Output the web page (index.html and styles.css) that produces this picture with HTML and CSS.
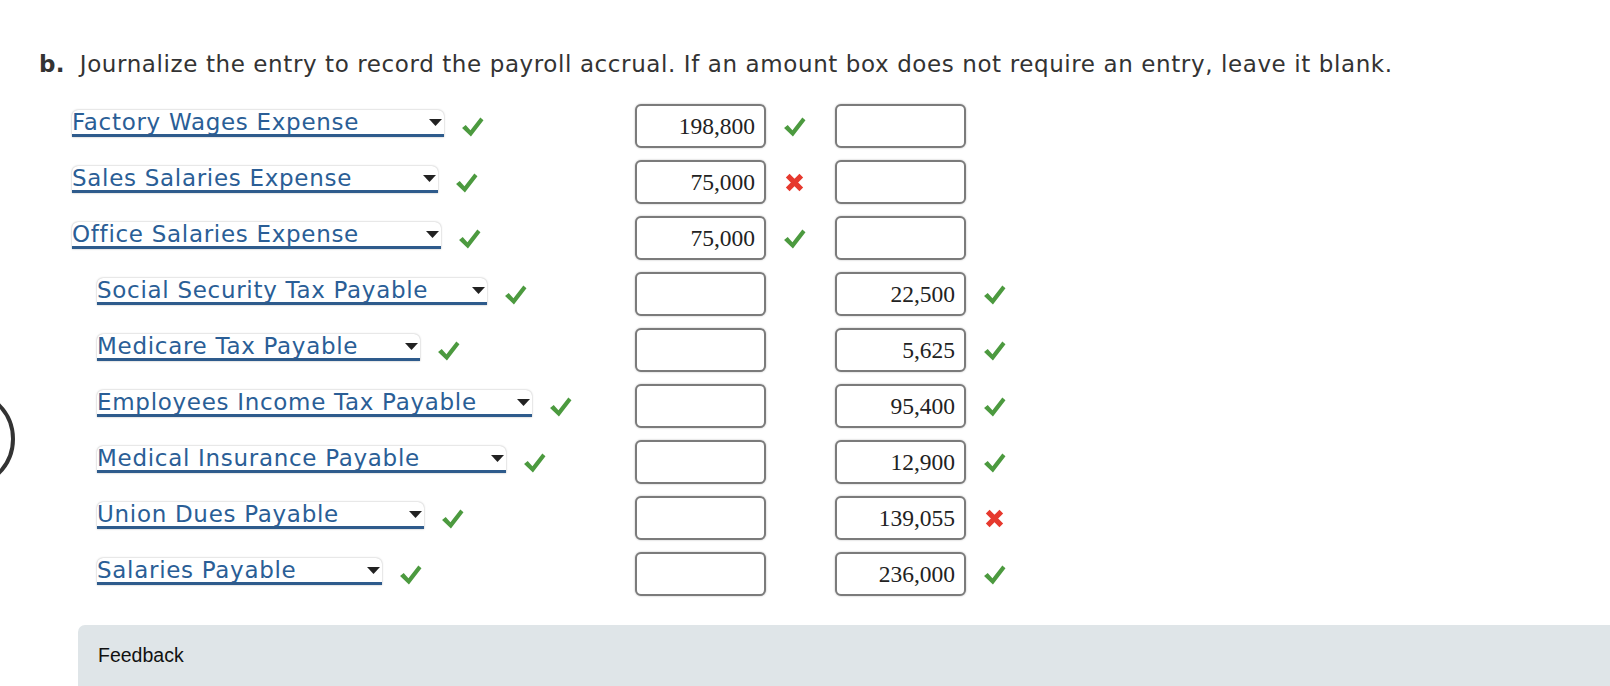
FILE: index.html
```html
<!DOCTYPE html>
<html>
<head>
<meta charset="utf-8">
<link rel="stylesheet" href="styles.css">
</head>
<body>
<div class="side-ring"></div>
<div class="page">
  <p class="prompt"><span class="part">b.</span>Journalize the entry to record the payroll accrual. If an amount box does not require an entry, leave it blank.</p>
  <div class="journal">
    <div class="row">
      <div class="acct">
        <div class="sel w1"><span class="sel-text">Factory Wages Expense</span><svg class="arrow" viewBox="0 0 13 7"><path d="M0 0H13L6.5 7Z"/></svg></div>
        <svg class="mark ok" viewBox="0 0 22 22"><path d="M1 12.5 4.5 9.5 9 14.5 18.5 2.5 21.5 5 9.5 20.5Z"/></svg>
      </div>
      <div class="amt">198,800</div>
      <div class="markcell"><svg class="mark ok" viewBox="0 0 22 22"><path d="M1 12.5 4.5 9.5 9 14.5 18.5 2.5 21.5 5 9.5 20.5Z"/></svg></div>
      <div class="amt"></div>
      <div class="markcell"></div>
    </div>
    <div class="row">
      <div class="acct">
        <div class="sel w2"><span class="sel-text">Sales Salaries Expense</span><svg class="arrow" viewBox="0 0 13 7"><path d="M0 0H13L6.5 7Z"/></svg></div>
        <svg class="mark ok" viewBox="0 0 22 22"><path d="M1 12.5 4.5 9.5 9 14.5 18.5 2.5 21.5 5 9.5 20.5Z"/></svg>
      </div>
      <div class="amt">75,000</div>
      <div class="markcell"><svg class="mark bad" viewBox="0 0 22 22"><path d="M4.5 4.5 17.5 17.5M17.5 4.5 4.5 17.5"/></svg></div>
      <div class="amt"></div>
      <div class="markcell"></div>
    </div>
    <div class="row">
      <div class="acct">
        <div class="sel w3"><span class="sel-text">Office Salaries Expense</span><svg class="arrow" viewBox="0 0 13 7"><path d="M0 0H13L6.5 7Z"/></svg></div>
        <svg class="mark ok" viewBox="0 0 22 22"><path d="M1 12.5 4.5 9.5 9 14.5 18.5 2.5 21.5 5 9.5 20.5Z"/></svg>
      </div>
      <div class="amt">75,000</div>
      <div class="markcell"><svg class="mark ok" viewBox="0 0 22 22"><path d="M1 12.5 4.5 9.5 9 14.5 18.5 2.5 21.5 5 9.5 20.5Z"/></svg></div>
      <div class="amt"></div>
      <div class="markcell"></div>
    </div>
    <div class="row">
      <div class="acct credit">
        <div class="sel w4"><span class="sel-text">Social Security Tax Payable</span><svg class="arrow" viewBox="0 0 13 7"><path d="M0 0H13L6.5 7Z"/></svg></div>
        <svg class="mark ok" viewBox="0 0 22 22"><path d="M1 12.5 4.5 9.5 9 14.5 18.5 2.5 21.5 5 9.5 20.5Z"/></svg>
      </div>
      <div class="amt"></div>
      <div class="markcell"></div>
      <div class="amt">22,500</div>
      <div class="markcell"><svg class="mark ok" viewBox="0 0 22 22"><path d="M1 12.5 4.5 9.5 9 14.5 18.5 2.5 21.5 5 9.5 20.5Z"/></svg></div>
    </div>
    <div class="row">
      <div class="acct credit">
        <div class="sel w5"><span class="sel-text">Medicare Tax Payable</span><svg class="arrow" viewBox="0 0 13 7"><path d="M0 0H13L6.5 7Z"/></svg></div>
        <svg class="mark ok" viewBox="0 0 22 22"><path d="M1 12.5 4.5 9.5 9 14.5 18.5 2.5 21.5 5 9.5 20.5Z"/></svg>
      </div>
      <div class="amt"></div>
      <div class="markcell"></div>
      <div class="amt">5,625</div>
      <div class="markcell"><svg class="mark ok" viewBox="0 0 22 22"><path d="M1 12.5 4.5 9.5 9 14.5 18.5 2.5 21.5 5 9.5 20.5Z"/></svg></div>
    </div>
    <div class="row">
      <div class="acct credit">
        <div class="sel w6"><span class="sel-text">Employees Income Tax Payable</span><svg class="arrow" viewBox="0 0 13 7"><path d="M0 0H13L6.5 7Z"/></svg></div>
        <svg class="mark ok" viewBox="0 0 22 22"><path d="M1 12.5 4.5 9.5 9 14.5 18.5 2.5 21.5 5 9.5 20.5Z"/></svg>
      </div>
      <div class="amt"></div>
      <div class="markcell"></div>
      <div class="amt">95,400</div>
      <div class="markcell"><svg class="mark ok" viewBox="0 0 22 22"><path d="M1 12.5 4.5 9.5 9 14.5 18.5 2.5 21.5 5 9.5 20.5Z"/></svg></div>
    </div>
    <div class="row">
      <div class="acct credit">
        <div class="sel w7"><span class="sel-text">Medical Insurance Payable</span><svg class="arrow" viewBox="0 0 13 7"><path d="M0 0H13L6.5 7Z"/></svg></div>
        <svg class="mark ok" viewBox="0 0 22 22"><path d="M1 12.5 4.5 9.5 9 14.5 18.5 2.5 21.5 5 9.5 20.5Z"/></svg>
      </div>
      <div class="amt"></div>
      <div class="markcell"></div>
      <div class="amt">12,900</div>
      <div class="markcell"><svg class="mark ok" viewBox="0 0 22 22"><path d="M1 12.5 4.5 9.5 9 14.5 18.5 2.5 21.5 5 9.5 20.5Z"/></svg></div>
    </div>
    <div class="row">
      <div class="acct credit">
        <div class="sel w8"><span class="sel-text">Union Dues Payable</span><svg class="arrow" viewBox="0 0 13 7"><path d="M0 0H13L6.5 7Z"/></svg></div>
        <svg class="mark ok" viewBox="0 0 22 22"><path d="M1 12.5 4.5 9.5 9 14.5 18.5 2.5 21.5 5 9.5 20.5Z"/></svg>
      </div>
      <div class="amt"></div>
      <div class="markcell"></div>
      <div class="amt">139,055</div>
      <div class="markcell"><svg class="mark bad" viewBox="0 0 22 22"><path d="M4.5 4.5 17.5 17.5M17.5 4.5 4.5 17.5"/></svg></div>
    </div>
    <div class="row">
      <div class="acct credit">
        <div class="sel w9"><span class="sel-text">Salaries Payable</span><svg class="arrow" viewBox="0 0 13 7"><path d="M0 0H13L6.5 7Z"/></svg></div>
        <svg class="mark ok" viewBox="0 0 22 22"><path d="M1 12.5 4.5 9.5 9 14.5 18.5 2.5 21.5 5 9.5 20.5Z"/></svg>
      </div>
      <div class="amt"></div>
      <div class="markcell"></div>
      <div class="amt">236,000</div>
      <div class="markcell"><svg class="mark ok" viewBox="0 0 22 22"><path d="M1 12.5 4.5 9.5 9 14.5 18.5 2.5 21.5 5 9.5 20.5Z"/></svg></div>
    </div>
  </div>
  <div class="feedback"><span class="fb-title">Feedback</span></div>
</div>
</body>
</html>
```

FILE: styles.css
```css
html, body {
  margin: 0;
  padding: 0;
  background: #fff;
  overflow: hidden;
}

body {
  width: 1610px;
  height: 686px;
  position: relative;
}

.side-ring {
  position: absolute;
  left: -85px;
  top: 389px;
  width: 92px;
  height: 92px;
  border: 4px solid #333;
  border-radius: 50%;
}

.page {
  padding-top: 51px;
}

.prompt {
  margin: 0 0 27px 39px;
  font-family: "DejaVu Sans", Verdana, sans-serif;
  font-size: 23px;
  letter-spacing: 0.6px;
  line-height: 26px;
  color: #333;
  white-space: nowrap;
}

.part {
  font-weight: bold;
  margin-right: 15px;
  letter-spacing: 0.3px;
}

.journal {
  display: flex;
  flex-direction: column;
  gap: 12px;
  padding-left: 72px;
}

.row {
  display: flex;
  height: 44px;
}

.acct {
  width: 563px;
  display: flex;
  align-items: flex-start;
}

.acct.credit {
  padding-left: 25px;
  box-sizing: border-box;
}

.sel {
  margin-top: 6px;
  height: 24px;
  border-bottom: 3px solid #2e5b8c;
  border-radius: 6px 6px 0 0;
  background: #fff;
  box-shadow: 0 0 2px rgba(0, 0, 0, 0.35);
  display: flex;
  align-items: center;
  justify-content: space-between;
  padding-right: 2px;
  box-sizing: content-box;
  overflow: hidden;
}

.sel-text {
  font-family: "DejaVu Sans", Verdana, sans-serif;
  font-size: 23px;
  letter-spacing: 0.7px;
  line-height: 24px;
  color: #2a5e96;
  white-space: nowrap;
}

.arrow {
  width: 13px;
  height: 7px;
  fill: #222;
  flex: none;
}

.w1 { width: 370px; }
.w2 { width: 364px; }
.w3 { width: 367px; }
.w4 { width: 388px; }
.w5 { width: 321px; }
.w6 { width: 433px; }
.w7 { width: 407px; }
.w8 { width: 325px; }
.w9 { width: 283px; }

.acct .mark {
  margin-left: 17px;
  align-self: center;
}

.mark {
  width: 23px;
  height: 23px;
  flex: none;
}

.mark.ok path {
  fill: #4c9a3f;
}

.mark.bad path {
  fill: none;
  stroke: #e6392e;
  stroke-width: 5;
  stroke-linecap: butt;
}

.amt {
  width: 131px;
  height: 44px;
  box-sizing: border-box;
  border: 2px solid #7b7b7b;
  border-radius: 6px;
  box-shadow: 0 0 2px rgba(0, 0, 0, 0.3);
  background: #fff;
  font-family: "Liberation Serif", "Times New Roman", serif;
  font-size: 23.5px;
  color: #222;
  text-align: right;
  padding-right: 9px;
  line-height: 40px;
}

.markcell {
  width: 69px;
  display: flex;
  align-items: center;
  padding-left: 17px;
  box-sizing: border-box;
}

.feedback {
  margin: 29px 0 0 78px;
  height: 80px;
  background: #dfe5e8;
  border-radius: 7px 0 0 0;
  padding: 19px 0 0 20px;
  box-sizing: border-box;
}

.fb-title {
  font-family: "Liberation Sans", Arial, sans-serif;
  font-size: 19.5px;
  color: #111;
}
```
